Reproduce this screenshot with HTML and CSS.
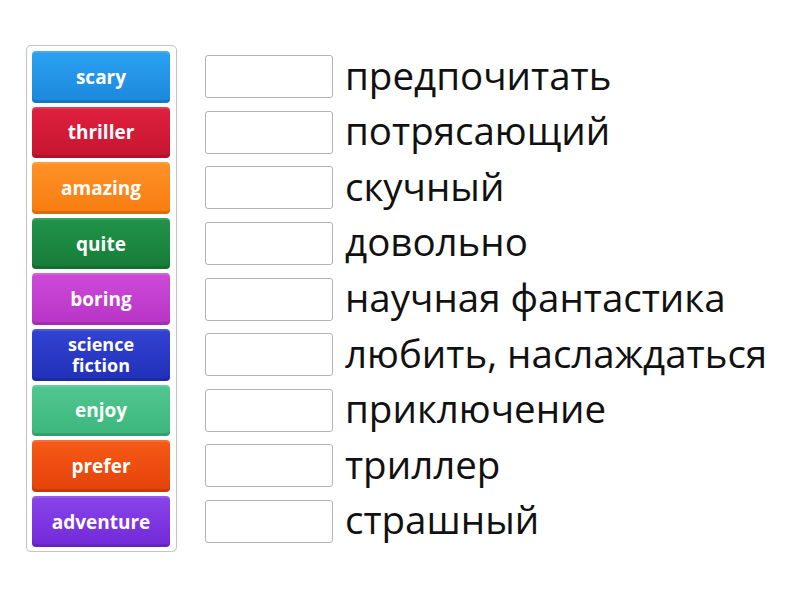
FILE: index.html
```html
<!DOCTYPE html>
<html>
<head>
<meta charset="utf-8">
<link rel="stylesheet" href="styles.css">
</head>
<body>
<div class="game">
  <div class="bank">
    <div class="tile c-blue">scary</div>
    <div class="tile c-red">thriller</div>
    <div class="tile c-orange">amazing</div>
    <div class="tile c-green">quite</div>
    <div class="tile c-pink">boring</div>
    <div class="tile c-navy two"><span class="ln">science</span><span class="ln">fiction</span></div>
    <div class="tile c-mint">enjoy</div>
    <div class="tile c-flame">prefer</div>
    <div class="tile c-purple">adventure</div>
  </div>
  <div class="targets">
    <div class="row"><div class="slot"></div><span class="word">предпочитать</span></div>
    <div class="row"><div class="slot"></div><span class="word">потрясающий</span></div>
    <div class="row"><div class="slot"></div><span class="word">скучный</span></div>
    <div class="row"><div class="slot"></div><span class="word">довольно</span></div>
    <div class="row"><div class="slot"></div><span class="word">научная фантастика</span></div>
    <div class="row"><div class="slot"></div><span class="word">любить, наслаждаться</span></div>
    <div class="row"><div class="slot"></div><span class="word">приключение</span></div>
    <div class="row"><div class="slot"></div><span class="word">триллер</span></div>
    <div class="row"><div class="slot"></div><span class="word">страшный</span></div>
  </div>
</div>
</body>
</html>
```

FILE: styles.css
```css
html, body {
  margin: 0;
  padding: 0;
  background: #fff;
}
body {
  font-family: "Open Sans", "Noto Sans", sans-serif;
}
.game {
  display: flex;
  align-items: flex-start;
  gap: 28px;
  padding: 45px 0 0 26px;
}
.bank {
  width: 138px;
  border: 1px solid #c4c4c4;
  border-radius: 5px;
  padding: 5px 6px 4px 5px;
  display: flex;
  flex-direction: column;
  gap: 4px;
  box-shadow: 0 1px 2px rgba(0,0,0,0.08);
}
.tile {
  height: 51.6px;
  border-radius: 4px;
  color: #fff;
  font-weight: 700;
  font-size: 19px;
  display: flex;
  align-items: center;
  justify-content: center;
  text-align: center;
  box-shadow: inset 0 -3px 0 rgba(0,0,0,0.12), inset 0 2px 0 rgba(255,255,255,0.12);
}
.tile.two {
  flex-direction: column;
  font-size: 18px;
  line-height: 21px;
}
.ln {
  display: block;
}
.c-blue { background: linear-gradient(#2ca1f2, #1b88dc); }
.c-red { background: linear-gradient(#e02040, #c5152f); }
.c-orange { background: linear-gradient(#ff9228, #f87c10); }
.c-green { background: linear-gradient(#23934a, #157c36); }
.c-pink { background: linear-gradient(#cd4ad9, #b834c6); }
.c-navy { background: linear-gradient(#3343d2, #2030b8); }
.c-mint { background: linear-gradient(#50c790, #3cb67d); }
.c-flame { background: linear-gradient(#f75a17, #e3420a); }
.c-purple { background: linear-gradient(#8a44ea, #7129d8); }

.targets {
  display: flex;
  flex-direction: column;
  gap: 4px;
  padding-top: 6px;
}
.row {
  height: 51.6px;
  display: flex;
  align-items: center;
  gap: 12px;
}
.slot {
  width: 126px;
  height: 41px;
  border: 1px solid #b3b3b3;
  border-radius: 3px;
  background: #fff;
  flex: none;
}
.word {
  font-size: 38.5px;
  color: #111;
  white-space: nowrap;
  line-height: 1;
  padding-bottom: 4px;
}
```
